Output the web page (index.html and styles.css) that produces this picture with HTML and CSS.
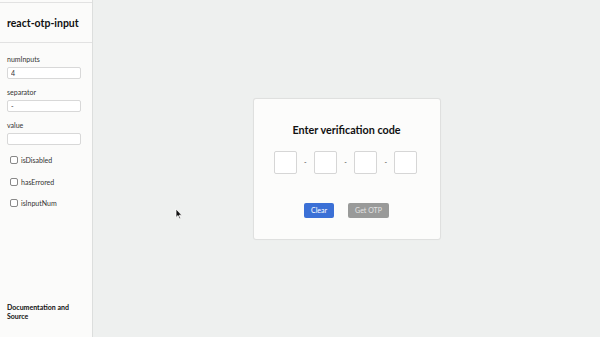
FILE: index.html
```html
<!DOCTYPE html>
<html lang="en">
  <head>
    <meta charset="UTF-8" />
    <meta name="viewport" content="width=device-width, initial-scale=1.0" />
    <title>react-otp-input</title>
    <link rel="stylesheet" href="styles.css">
  </head>
  <body>
    <div class="app">
      <div class="side">
        <div class="side-top"></div>
        <h1 class="side-title">react-otp-input</h1>
        <div class="side-body">
          <label class="field">
            <span>numInputs</span>
            <input type="text" value="4" />
          </label>
          <label class="field">
            <span>separator</span>
            <input type="text" value="-" />
          </label>
          <label class="field">
            <span>value</span>
            <input type="text" value="" />
          </label>
          <label class="check"><span class="box"></span>isDisabled</label>
          <label class="check"><span class="box"></span>hasErrored</label>
          <label class="check"><span class="box"></span>isInputNum</label>
        </div>
        <div class="side-foot">Documentation and Source</div>
      </div>
      <div class="main">
        <div class="card">
          <h2 class="card-title">Enter verification code</h2>
          <div class="otp">
            <div class="otp-box"></div>
            <span class="sep">-</span>
            <div class="otp-box"></div>
            <span class="sep">-</span>
            <div class="otp-box"></div>
            <span class="sep">-</span>
            <div class="otp-box"></div>
          </div>
          <div class="btns">
            <button class="btn btn-clear">Clear</button>
            <button class="btn btn-get">Get OTP</button>
          </div>
        </div>
      </div>
      <svg class="cursor" width="8" height="12" viewBox="0 0 8 12">
        <path d="M1 1 L1 9.5 L3 7.6 L4.4 10.8 L5.6 10.3 L4.2 7.2 L6.8 7.2 Z" fill="#111" stroke="#fff" stroke-width="0.8" />
      </svg>
    </div>
  </body>
</html>
```

FILE: styles.css
```css
* {
  margin: 0;
  padding: 0;
  box-sizing: border-box;
}

body {
  font-family: Lato, "Open Sans", sans-serif;
  color: #222;
}

.app {
  position: relative;
  display: flex;
  width: 600px;
  height: 337px;
  overflow: hidden;
}

.side {
  display: flex;
  flex-direction: column;
  width: 93px;
  height: 100%;
  background: #fbfbfa;
  border-right: 1px solid #dcdedd;
}

.side-top {
  height: 3px;
  border-bottom: 1px solid #e2e2e2;
}

.side-title {
  height: 40px;
  padding: 14px 0 0 7px;
  font-size: 10.5px;
  font-weight: 700;
  color: #111;
  white-space: nowrap;
  border-bottom: 1px solid #e2e2e2;
}

.side-body {
  flex: 1;
  padding: 12px 0 0 7px;
}

.field {
  display: flex;
  flex-direction: column;
  margin-bottom: 9px;
}

.field span {
  font-size: 7px;
  color: #333;
  height: 12px;
}

.field input {
  width: 74px;
  height: 12px;
  border: 1px solid #d8d8d8;
  border-radius: 2px;
  background: #fff;
  font-family: inherit;
  font-size: 7px;
  padding: 0 3px;
  color: #333;
  outline: none;
}

.check {
  display: flex;
  align-items: center;
  height: 12px;
  margin: 0 0 9.5px 3px;
  font-size: 7px;
  color: #333;
}

.field + .check {
  margin-top: 8px;
}

.box {
  width: 8px;
  height: 8px;
  margin-right: 3px;
  border: 1px solid #888;
  border-radius: 2px;
  background: #fff;
}

.side-foot {
  height: 34px;
  padding: 0 7px;
  font-size: 7px;
  font-weight: 700;
  line-height: 9px;
  color: #111;
}

.main {
  flex: 1;
  display: flex;
  align-items: center;
  justify-content: center;
  background: #eef0ef;
}

.card {
  display: flex;
  flex-direction: column;
  align-items: center;
  width: 188px;
  height: 142px;
  background: #fcfcfb;
  border: 1px solid #dfe0df;
  border-radius: 3px;
  box-shadow: 0 0 1px rgba(0, 0, 0, 0.05);
}

.card-title {
  margin-top: 24px;
  font-size: 10.8px;
  font-weight: 700;
  color: #111;
}

.otp {
  display: flex;
  align-items: center;
  margin-top: 15px;
  margin-right: 2px;
}

.otp-box {
  width: 23px;
  height: 23px;
  border: 1px solid #d6d6d6;
  border-radius: 2px;
  background: #fff;
}

.sep {
  width: 17.3px;
  text-align: center;
  font-size: 7px;
  color: #444;
}

.btns {
  display: flex;
  gap: 14px;
  margin-top: 29px;
}

.btn {
  height: 15px;
  border: none;
  border-radius: 2px;
  font-family: inherit;
  font-size: 7px;
  color: #fff;
}

.btn-clear {
  width: 30px;
  background: #3b70d6;
}

.btn-get {
  width: 41px;
  background: #999a99;
  color: #e4e4e4;
}

.cursor {
  position: absolute;
  left: 175px;
  top: 208px;
}
```
